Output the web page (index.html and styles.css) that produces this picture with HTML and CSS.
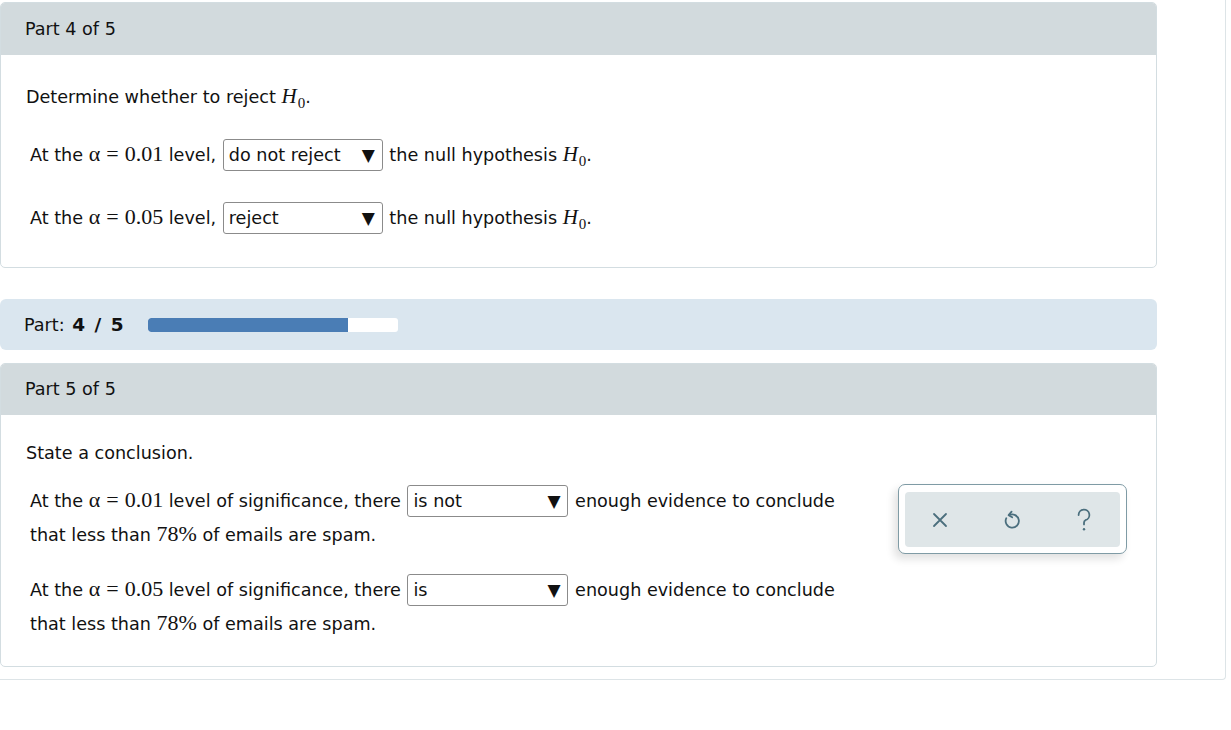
FILE: index.html
```html
<!DOCTYPE html>
<html>
<head>
<meta charset="utf-8">
<link rel="stylesheet" href="styles.css">
</head>
<body>
<div class="page">
  <div class="card card-1">
    <div class="card-head">Part 4 of 5</div>
    <div class="card-body body-1">
      <p class="lead">Determine whether to reject <span class="mi">H<sub class="sub">0</sub></span>.</p>
      <div class="row row-first">At the <span class="math">α<span class="eq">=</span>0.01</span> level, <span class="select">do not reject<span class="caret">▼</span></span> the null hypothesis <span class="mi">H<sub class="sub">0</sub></span>.</div>
      <div class="row row-second">At the <span class="math">α<span class="eq">=</span>0.05</span> level, <span class="select">reject<span class="caret">▼</span></span> the null hypothesis <span class="mi">H<sub class="sub">0</sub></span>.</div>
    </div>
  </div>

  <div class="progress">
    <span class="progress-label">Part: <b>4 / 5</b></span>
    <div class="bar"><div class="bar-fill" style="width:80%"></div></div>
  </div>

  <div class="card card-2">
    <div class="card-head head-2">Part 5 of 5</div>
    <div class="card-body body-2">
      <p class="lead">State a conclusion.</p>
      <div class="split">
        <div class="answers">
          <div class="row2">At the <span class="math">α<span class="eq">=</span>0.01</span> level of significance, there <span class="select select-wide">is not<span class="caret">▼</span></span> enough evidence to conclude<br>that less than <span class="math">78%</span> of emails are spam.</div>
          <div class="row2 row2-second">At the <span class="math">α<span class="eq">=</span>0.05</span> level of significance, there <span class="select select-wide">is<span class="caret">▼</span></span> enough evidence to conclude<br>that less than <span class="math">78%</span> of emails are spam.</div>
        </div>
        <div class="tools">
          <div class="tools-inner">
            <svg class="ic" width="20" height="20" viewBox="0 0 20 20"><path d="M4 4 L16 16 M16 4 L4 16" stroke="#4b6f7e" stroke-width="1.8" fill="none" stroke-linecap="round"/></svg>
            <svg class="ic" width="20" height="22" viewBox="0 0 20 22"><path d="M7.2 6.2 A6.6 6.6 0 1 1 4.3 9.2" stroke="#4b6f7e" stroke-width="1.8" fill="none" stroke-linecap="round"/><path d="M9.6 2.6 L6.6 6.2 L10.2 8.2" stroke="#4b6f7e" stroke-width="1.8" fill="none" stroke-linecap="round" stroke-linejoin="round"/></svg>
            <svg class="ic" width="20" height="26" viewBox="0 0 20 26"><path d="M4.6 8 A5.4 5.4 0 1 1 11.4 13.2 Q10 13.9 10 15.8 V17.4" stroke="#4b6f7e" stroke-width="1.8" fill="none" stroke-linecap="round"/><circle cx="10" cy="22.2" r="1.2" fill="#4b6f7e"/></svg>
          </div>
        </div>
      </div>
    </div>
  </div>
</div>
</body>
</html>
```

FILE: styles.css
```css
html, body {
  margin: 0;
  padding: 0;
  background: #ffffff;
}
body {
  font-family: "DejaVu Sans", Verdana, sans-serif;
  font-size: 17.6px;
  color: #111;
}
.page {
  width: 1226px;
  height: 680px;
  box-sizing: border-box;
  border-right: 1px solid #dde4e7;
  border-bottom: 1px solid #dde4e7;
  border-bottom-right-radius: 4px;
  padding-top: 2px;
}
.card {
  width: 1157px;
  box-sizing: border-box;
  border: 1px solid #d3dde1;
  border-radius: 5px;
  overflow: hidden;
  background: #fff;
}
.card-head {
  height: 53px;
  background: #d2dadd;
  display: flex;
  align-items: center;
  padding-left: 25px;
  margin: -1px -1px 0 -1px;
}
.head-2 { height: 52px; }
.card-body {
  padding-left: 25px;
}
.body-1 { padding-top: 31px; padding-bottom: 32px; }
.body-2 { padding-top: 28px; padding-bottom: 25px; }
.lead {
  margin: 0;
  line-height: 20px;
}
.row {
  line-height: 34px;
  height: 34px;
  margin-left: 4px;
}
.row-first { margin-top: 31px; }
.row-second { margin-top: 29px; }
.math {
  font-family: "Liberation Serif", "Times New Roman", serif;
  font-size: 22px;
  line-height: 1;
}
.eq { margin: 0 6px; }
.mi {
  font-family: "Liberation Serif", "Times New Roman", serif;
  font-style: italic;
  font-size: 21px;
  line-height: 1;
}
.sub {
  font-style: normal;
  font-size: 15px;
  vertical-align: -5px;
  line-height: 0;
  margin-left: 1px;
}
.select {
  display: inline-block;
  box-sizing: border-box;
  width: 160px;
  height: 32px;
  border: 1px solid #8b8b8b;
  border-radius: 3px;
  padding: 0 7px 0 5px;
  line-height: 30px;
  background: #fff;
  margin: 0 1px;
}
.caret {
  float: right;
  font-size: 17px;
  color: #111;
}
.progress {
  width: 1157px;
  box-sizing: border-box;
  height: 51px;
  margin-top: 31px;
  background: #dae6ef;
  border-radius: 6px;
  display: flex;
  align-items: center;
  padding-left: 24px;
}
.progress-label { width: 124px; }
.progress-label b { font-weight: bold; font-size: 18.5px; word-spacing: 3px; margin-left: 2px; }
.bar {
  width: 250px;
  height: 14px;
  background: #fff;
  border-radius: 3px;
  overflow: hidden;
}
.bar-fill {
  height: 100%;
  background: #4a7db5;
  border-radius: 3px 0 0 3px;
}
.card-2 { margin-top: 13px; }
.split {
  display: flex;
  align-items: flex-start;
  margin-top: 21px;
}
.answers {
  width: 868px;
  margin-left: 4px;
}
.row2 { line-height: 34px; }
.row2-second { margin-top: 21px; }
.select-wide { width: 161px; }
.tools {
  width: 229px;
  height: 70px;
  box-sizing: border-box;
  border: 1px solid #7f9ba5;
  border-radius: 7px;
  padding: 7px 6px 6px 6px;
  box-shadow: -4px 5px 9px rgba(0,0,0,0.12);
  background: #fff;
}
.tools-inner {
  height: 100%;
  background: #dfe6e8;
  border-radius: 4px;
  display: flex;
  align-items: center;
  justify-content: space-between;
  padding: 0 26px 0 25px;
}
.ic { display: block; }
```
